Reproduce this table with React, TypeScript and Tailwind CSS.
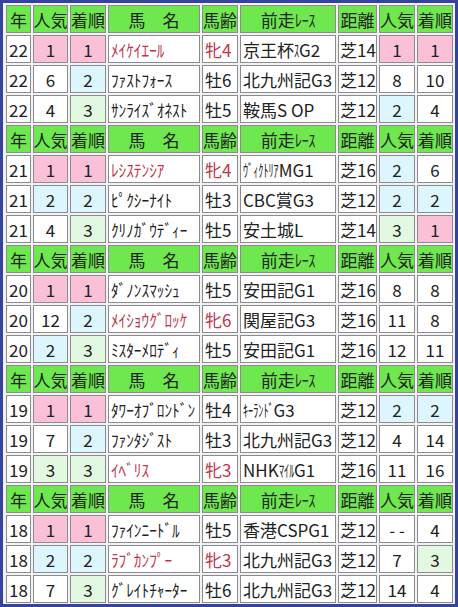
import React from "react";

type Tone = "" | "p" | "b" | "g";

type Row = {
  year: string;
  pop: [string, Tone];
  fin: [string, Tone];
  name: string;
  age: string;
  mare?: boolean;
  race: string;
  dist: string;
  pPop: [string, Tone];
  pFin: [string, Tone];
};

const toneBg: Record<Tone, string> = {
  "": "bg-white",
  p: "bg-[#f9c0d8]",
  b: "bg-[#ddf5fd]",
  g: "bg-[#e2f8e0]",
};

const blocks: Row[][] = [
  [
    { year: "22", pop: ["1", "p"], fin: ["1", "p"], name: "ﾒｲｹｲｴｰﾙ", age: "牝4", mare: true, race: "京王杯ｽG2", dist: "芝14", pPop: ["1", "p"], pFin: ["1", "p"] },
    { year: "22", pop: ["6", ""], fin: ["2", "b"], name: "ﾌｧｽﾄﾌｫｰｽ", age: "牡6", race: "北九州記G3", dist: "芝12", pPop: ["8", ""], pFin: ["10", ""] },
    { year: "22", pop: ["4", ""], fin: ["3", "g"], name: "ｻﾝﾗｲｽﾞｵﾈｽﾄ", age: "牡5", race: "鞍馬S OP", dist: "芝12", pPop: ["2", "b"], pFin: ["4", ""] },
  ],
  [
    { year: "21", pop: ["1", "p"], fin: ["1", "p"], name: "ﾚｼｽﾃﾝｼｱ", age: "牝4", mare: true, race: "ｳﾞｨｸﾄﾘｱMG1", dist: "芝16", pPop: ["2", "b"], pFin: ["6", ""] },
    { year: "21", pop: ["2", "b"], fin: ["2", "b"], name: "ﾋﾟｸｼｰﾅｲﾄ", age: "牡3", race: "CBC賞G3", dist: "芝12", pPop: ["2", "b"], pFin: ["2", "b"] },
    { year: "21", pop: ["4", ""], fin: ["3", "g"], name: "ｸﾘﾉｶﾞｳﾃﾞｨｰ", age: "牡5", race: "安土城L", dist: "芝14", pPop: ["3", "g"], pFin: ["1", "p"] },
  ],
  [
    { year: "20", pop: ["1", "p"], fin: ["1", "p"], name: "ﾀﾞﾉﾝｽﾏｯｼｭ", age: "牡5", race: "安田記G1", dist: "芝16", pPop: ["8", ""], pFin: ["8", ""] },
    { year: "20", pop: ["12", ""], fin: ["2", "b"], name: "ﾒｲｼｮｳｸﾞﾛｯｹ", age: "牝6", mare: true, race: "関屋記G3", dist: "芝16", pPop: ["11", ""], pFin: ["8", ""] },
    { year: "20", pop: ["2", "b"], fin: ["3", "g"], name: "ﾐｽﾀｰﾒﾛﾃﾞｨ", age: "牡5", race: "安田記G1", dist: "芝16", pPop: ["12", ""], pFin: ["11", ""] },
  ],
  [
    { year: "19", pop: ["1", "p"], fin: ["1", "p"], name: "ﾀﾜｰｵﾌﾞﾛﾝﾄﾞﾝ", age: "牡4", race: "ｷｰﾗﾝﾄﾞG3", dist: "芝12", pPop: ["2", "b"], pFin: ["2", "b"] },
    { year: "19", pop: ["7", ""], fin: ["2", "b"], name: "ﾌｧﾝﾀｼﾞｽﾄ", age: "牡3", race: "北九州記G3", dist: "芝12", pPop: ["4", ""], pFin: ["14", ""] },
    { year: "19", pop: ["3", "g"], fin: ["3", "g"], name: "ｲﾍﾞﾘｽ", age: "牝3", mare: true, race: "NHKﾏｲﾙG1", dist: "芝16", pPop: ["11", ""], pFin: ["16", ""] },
  ],
  [
    { year: "18", pop: ["1", "p"], fin: ["1", "p"], name: "ﾌｧｲﾝﾆｰﾄﾞﾙ", age: "牡5", race: "香港CSPG1", dist: "芝12", pPop: ["- -", ""], pFin: ["4", ""] },
    { year: "18", pop: ["2", "b"], fin: ["2", "b"], name: "ﾗﾌﾞｶﾝﾌﾟｰ", age: "牝3", mare: true, race: "北九州記G3", dist: "芝12", pPop: ["7", ""], pFin: ["3", "g"] },
    { year: "18", pop: ["7", ""], fin: ["3", "g"], name: "ｸﾞﾚｲﾄﾁｬｰﾀｰ", age: "牡6", race: "北九州記G3", dist: "芝12", pPop: ["14", ""], pFin: ["4", ""] },
  ],
];

const headers = ["年", "人気", "着順", "馬　名", "馬齢", "前走ﾚｰｽ", "距離", "人気", "着順"];

// half-width kana: squeezed horizontally, the freed width given back through a negative margin
function Narrow({ text, scale }: { text: string; scale: number }) {
  const parts = text.match(/[\uFF61-\uFF9F]+|[^\uFF61-\uFF9F]+/g) ?? [];
  return (
    <>
      {parts.map((p, i) =>
        /[\uFF61-\uFF9F]/.test(p) ? (
          <span
            key={i}
            className="inline-block origin-left"
            style={{ transform: `scaleX(${scale})`, marginRight: -p.length * 8.5 * (1 - scale) }}
          >
            {p}
          </span>
        ) : (
          <span key={i}>{p}</span>
        )
      )}
    </>
  );
}

function Cell({
  children,
  bg = "bg-white",
  align = "center",
  red,
}: {
  children: React.ReactNode;
  bg?: string;
  align?: "center" | "left";
  red?: boolean;
}) {
  return (
    <div
      className={`h-[28px] border border-[#8c8c8c] flex items-center whitespace-nowrap overflow-hidden leading-none text-[17px] ${bg} ${
        align === "center" ? "justify-center" : "justify-start pl-[1px]"
      } ${red ? "text-[#c0334a]" : "text-[#222]"}`}
    >
      {children}
    </div>
  );
}

export default function App() {
  return (
    <div className="w-[458px] h-[607px] border-[3px] border-[#34449c] bg-[#f2f2f6] pt-[2px] pl-[3px] font-['Noto_Sans_CJK_JP',sans-serif]">
      <div className="grid grid-cols-[25px_35px_36px_92px_36px_96px_39px_36px_36px] gap-[2px]">
        {blocks.map((rows, bi) => (
          <React.Fragment key={bi}>
            {headers.map((h, hi) => (
              <Cell key={"h" + hi} bg="bg-[#6ee84e]">
                <Narrow text={h} scale={0.8} />
              </Cell>
            ))}
            {rows.map((r, ri) => (
              <React.Fragment key={ri}>
                <Cell>{r.year}</Cell>
                <Cell bg={toneBg[r.pop[1]]}>{r.pop[0]}</Cell>
                <Cell bg={toneBg[r.fin[1]]}>{r.fin[0]}</Cell>
                <Cell align="left" red={r.mare}>
                  <span className="inline-block origin-left scale-x-90 pl-[1px]">{r.name}</span>
                </Cell>
                <Cell align="left" red={r.mare}>
                  <span className="pl-[1px]">{r.age}</span>
                </Cell>
                <Cell align="left">
                  <span className="pl-[1px]">
                    <Narrow text={r.race} scale={0.6} />
                  </span>
                </Cell>
                <Cell align="left">{r.dist}</Cell>
                <Cell bg={toneBg[r.pPop[1]]}>{r.pPop[0]}</Cell>
                <Cell bg={toneBg[r.pFin[1]]}>{r.pFin[0]}</Cell>
              </React.Fragment>
            ))}
          </React.Fragment>
        ))}
      </div>
    </div>
  );
}
